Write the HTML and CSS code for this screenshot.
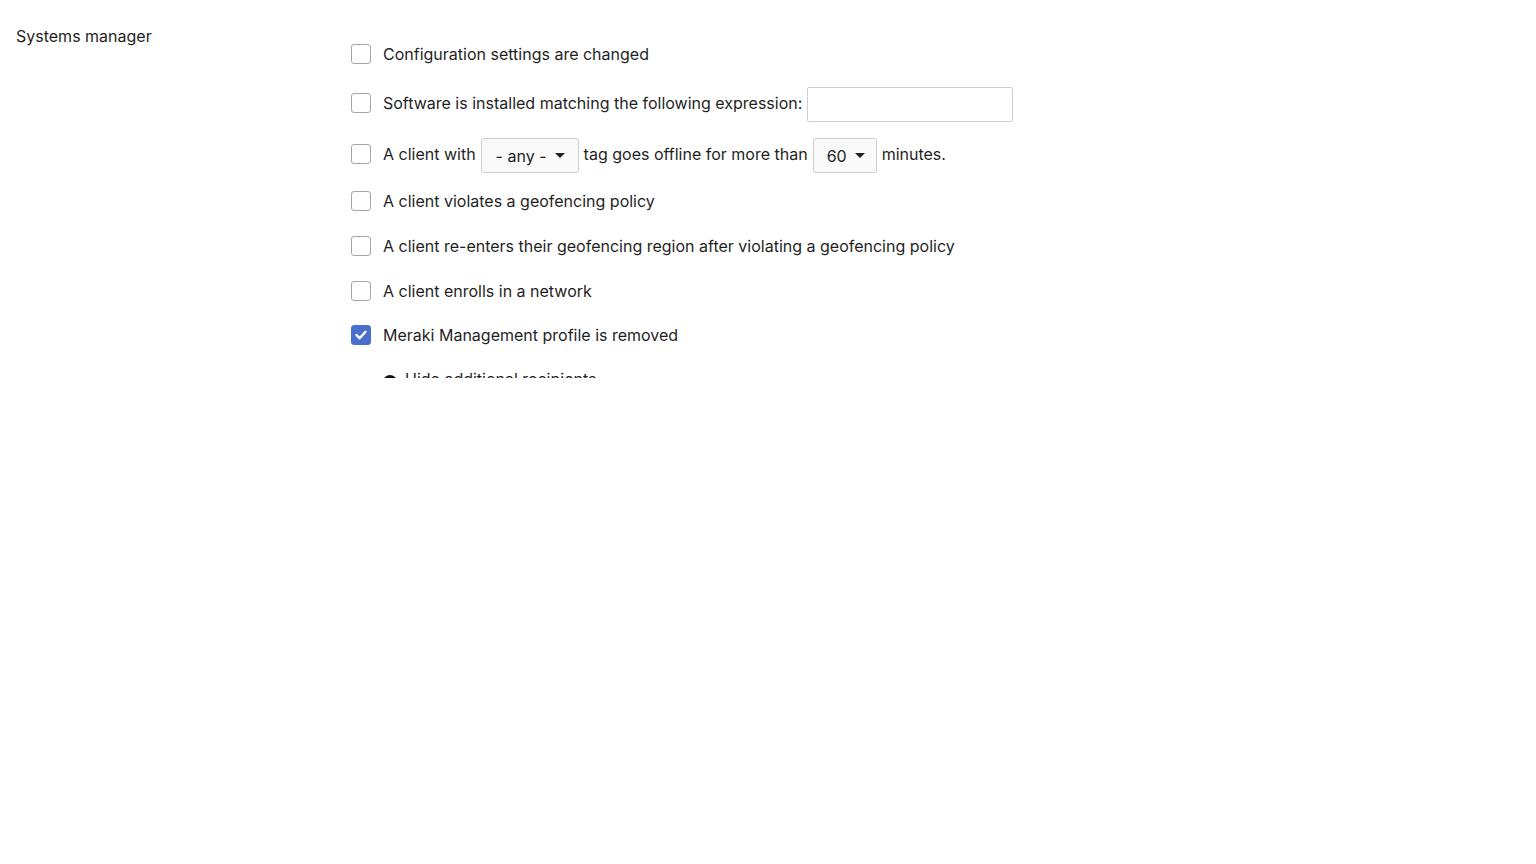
FILE: index.html
```html
<!DOCTYPE html>
<html>
<head>
	<meta charset="utf-8">
	<title>Alerts</title>
	<link rel="stylesheet" href="styles.css">
</head>
<body>
	<div class="section">
		<div class="label">Systems manager</div>
		<div class="options">
			<div class="row r1">
				<span class="box"></span>
				<span class="txt">Configuration settings are changed</span>
			</div>
			<div class="row r2">
				<span class="box"></span>
				<span class="txt">Software is installed matching the following expression:</span>
				<input type="text" class="expr">
			</div>
			<div class="row r3">
				<span class="box"></span>
				<span class="txt">A client with</span>
				<span class="sel sel-any">- any -<i class="caret"></i></span>
				<span class="txt">tag goes offline for more than</span>
				<span class="sel sel-min">60<i class="caret"></i></span>
				<span class="txt">minutes.</span>
			</div>
			<div class="row r4">
				<span class="box"></span>
				<span class="txt">A client violates a geofencing policy</span>
			</div>
			<div class="row r5">
				<span class="box"></span>
				<span class="txt">A client re-enters their geofencing region after violating a geofencing policy</span>
			</div>
			<div class="row r6">
				<span class="box"></span>
				<span class="txt">A client enrolls in a network</span>
			</div>
			<div class="row r7">
				<span class="box checked">
					<svg width="14" height="14" viewBox="0 0 14 14"><path d="M2.5 7.2 L5.6 10.2 L11.5 3.8" fill="none" stroke="#fff" stroke-width="2.4" stroke-linecap="round" stroke-linejoin="round"/></svg>
				</span>
				<span class="txt">Meraki Management profile is removed</span>
			</div>
			<div class="hide">
				<span class="dot"></span>
				<span class="txt">Hide additional recipients</span>
			</div>
		</div>
	</div>
</body>
</html>
```

FILE: styles.css
```css
*{
	padding: 0;
	margin: 0;
	box-sizing: border-box;
}
body{
	font-family: Inter, "Liberation Sans", sans-serif;
	font-size: 16px;
	color: #1f1f1f;
	background: #fff;
}
.section{
	display: flex;
	height: 378px;
	overflow: hidden;
}
.label{
	width: 351px;
	padding: 26px 0 0 16px;
	line-height: 20px;
}
.options{
	padding-top: 44px;
}
.row{
	display: flex;
	align-items: center;
	height: 20px;
	margin-bottom: 25px;
	white-space: nowrap;
}
.r1{ margin-bottom: 23px; }
.r2{ height: 35px; margin-bottom: 16px; }
.r3{ height: 35px; margin-bottom: 18px; }
.r6{ margin-bottom: 24px; }
.r7{ margin-bottom: 24px; }
.box{
	width: 20px;
	height: 20px;
	border: 1px solid #a6a6a6;
	border-radius: 3px;
	margin-right: 12px;
	flex-shrink: 0;
	display: flex;
	align-items: center;
	justify-content: center;
}
.box.checked{
	background: #4a6fcf;
	border-color: #4a6fcf;
}
.r2 .box, .r2 .txt, .r3 .box, .r3 .txt{
	margin-top: -4px;
}
.txt{
	line-height: 20px;
}
.expr{
	width: 206px;
	height: 35px;
	margin-left: 5px;
	border: 1px solid #cfcfcf;
	border-radius: 2px;
	background: #fff;
	outline: none;
}
.sel{
	display: flex;
	align-items: center;
	height: 35px;
	border: 1px solid #cfcfcf;
	border-radius: 3px;
	background: #f9f9f9;
	margin: 0 5px;
}
.sel-any{
	width: 98px;
	padding-left: 14px;
}
.sel-min{
	width: 64px;
	padding-left: 13px;
}
.caret{
	width: 0;
	height: 0;
	border-left: 5px solid transparent;
	border-right: 5px solid transparent;
	border-top: 5px solid #222;
	margin-left: 8px;
}
.hide{
	display: flex;
	align-items: center;
	height: 20px;
	padding-left: 32px;
}
.dot{
	width: 14px;
	height: 14px;
	border-radius: 50%;
	background: #111;
	margin-right: 8px;
	margin-top: 6px;
}
```
